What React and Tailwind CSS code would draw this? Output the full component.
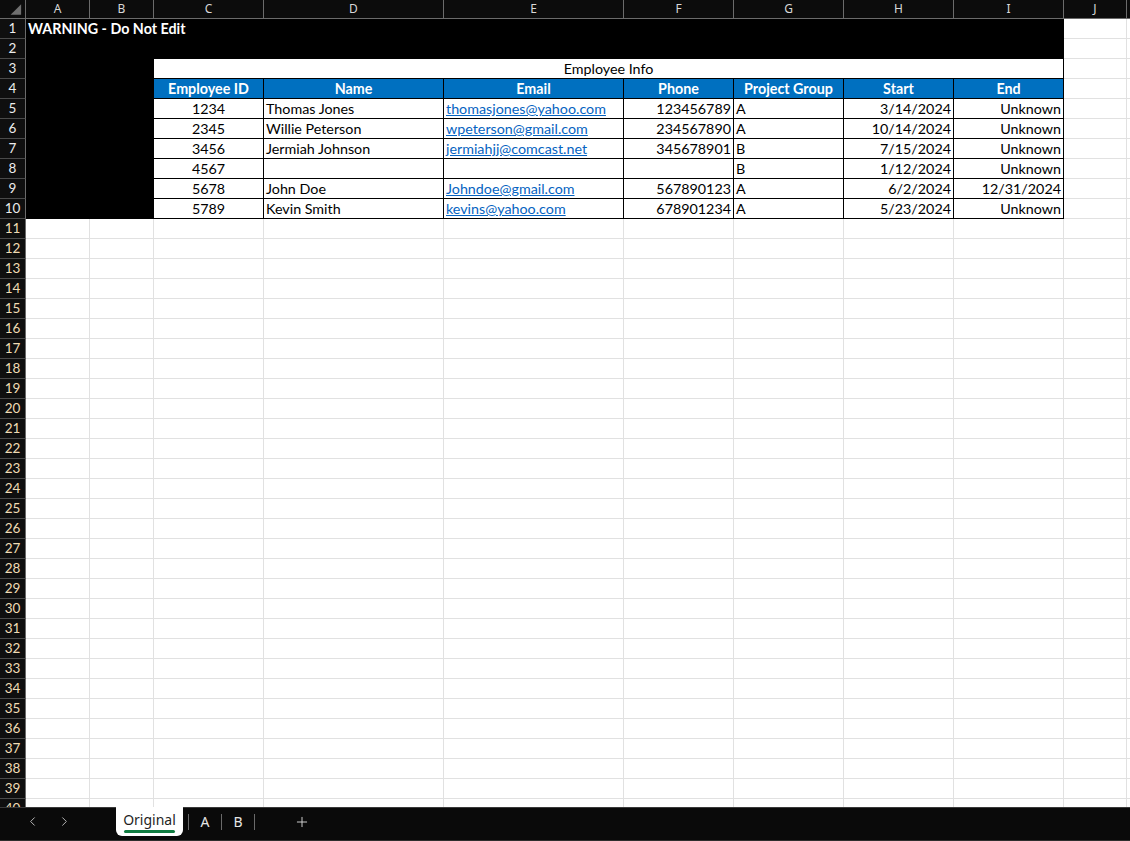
import { ChevronLeft, ChevronRight, Plus } from "lucide-react";

const COLS = [
  { key: "A", w: "w-[64px]" },
  { key: "B", w: "w-[64px]" },
  { key: "C", w: "w-[110px]" },
  { key: "D", w: "w-[180px]" },
  { key: "E", w: "w-[180px]" },
  { key: "F", w: "w-[110px]" },
  { key: "G", w: "w-[110px]" },
  { key: "H", w: "w-[110px]" },
  { key: "I", w: "w-[110px]" },
  { key: "J", w: "w-[63px]" },
];

const TABLE_COLS = [
  { label: "Employee ID", w: "w-[110px]", align: "justify-center" },
  { label: "Name", w: "w-[180px]", align: "justify-start" },
  { label: "Email", w: "w-[180px]", align: "justify-start" },
  { label: "Phone", w: "w-[110px]", align: "justify-end" },
  { label: "Project Group", w: "w-[110px]", align: "justify-start" },
  { label: "Start", w: "w-[110px]", align: "justify-end" },
  { label: "End", w: "w-[110px]", align: "justify-end" },
];

const EMPLOYEES = [
  ["1234", "Thomas Jones", "thomasjones@yahoo.com", "123456789", "A", "3/14/2024", "Unknown"],
  ["2345", "Willie Peterson", "wpeterson@gmail.com", "234567890", "A", "10/14/2024", "Unknown"],
  ["3456", "Jermiah Johnson", "jermiahjj@comcast.net", "345678901", "B", "7/15/2024", "Unknown"],
  ["4567", "", "", "", "B", "1/12/2024", "Unknown"],
  ["5678", "John Doe", "Johndoe@gmail.com", "567890123", "A", "6/2/2024", "12/31/2024"],
  ["5789", "Kevin Smith", "kevins@yahoo.com", "678901234", "A", "5/23/2024", "Unknown"],
];

const cellFont = { fontFamily: "Lato, 'Open Sans', sans-serif" };

function RowHeader({ n }) {
  return (
    <div
      className={`w-[26px] shrink-0 h-full flex items-center justify-center bg-[#0f0f0f] border-r border-b border-r-[#6b6b6b] border-b-[#4a4a4a] text-[13.5px] ${
        n <= 10 ? "text-[#ececec]" : "text-[#f0dcb4]"
      }`}
    >
      {n}
    </div>
  );
}

function GridCell({ w }) {
  return <div className={`${w} shrink-0 h-full border-r border-b border-[#e1e1e1]`} />;
}

function Tail() {
  return (
    <>
      <GridCell w="w-[63px]" />
      <div className="flex-1 h-full border-b border-[#e1e1e1]" />
    </>
  );
}

function Row({ n, children }) {
  return (
    <div className="flex h-[20px] shrink-0">
      <RowHeader n={n} />
      {children}
    </div>
  );
}

export default function App() {
  const emptyRows = [];
  for (let i = 11; i <= 40; i++) emptyRows.push(i);

  return (
    <div
      className="w-[1130px] h-[841px] flex flex-col overflow-hidden bg-white"
      style={{ fontFamily: "'Noto Sans', 'Open Sans', sans-serif" }}
    >
      {/* column headers */}
      <div className="flex h-[19px] shrink-0 bg-[#0c0c0c] border-b border-[#6b6b6b]">
        <div className="w-[26px] shrink-0 h-full border-r border-[#6b6b6b] flex items-center justify-center">
          <svg width="26" height="18" viewBox="0 0 26 18">
            <polygon points="22,4 22,15 11,15" fill="#6f6f6f" />
          </svg>
        </div>
        {COLS.map((c) => (
          <div
            key={c.key}
            className={`${c.w} shrink-0 h-full border-r border-[#6b6b6b] flex items-center justify-center text-[12px] text-[#d8d8d8]`}
          >
            {c.key}
          </div>
        ))}
        <div className="flex-1" />
      </div>

      {/* sheet body */}
      <div className="flex-1 flex flex-col overflow-hidden text-[14.3px] text-black" style={cellFont}>
        <Row n={1}>
          <div className="w-[1038px] shrink-0 h-full bg-black text-white font-bold flex items-center pl-[2px]">
            WARNING - Do Not Edit
          </div>
          <Tail />
        </Row>
        <Row n={2}>
          <div className="w-[1038px] shrink-0 h-full bg-black" />
          <Tail />
        </Row>
        <Row n={3}>
          <div className="w-[128px] shrink-0 h-full bg-black" />
          <div className="w-[910px] shrink-0 h-full border-r border-b border-black flex items-center justify-center">
            Employee Info
          </div>
          <Tail />
        </Row>
        <Row n={4}>
          <div className="w-[128px] shrink-0 h-full bg-black" />
          {TABLE_COLS.map((c) => (
            <div
              key={c.label}
              className={`${c.w} shrink-0 h-full bg-[#0070c0] border-r border-b border-black flex items-center justify-center text-white font-bold`}
            >
              {c.label}
            </div>
          ))}
          <Tail />
        </Row>
        {EMPLOYEES.map((emp, r) => (
          <Row n={r + 5} key={emp[0]}>
            <div className="w-[128px] shrink-0 h-full bg-black" />
            {TABLE_COLS.map((c, i) => (
              <div
                key={c.label}
                className={`${c.w} shrink-0 h-full border-r border-b border-black flex items-center px-[2px] whitespace-nowrap ${c.align}`}
              >
                {i === 2 && emp[i] ? (
                  <span className="text-[#0563c1] underline">{emp[i]}</span>
                ) : (
                  emp[i]
                )}
              </div>
            ))}
            <Tail />
          </Row>
        ))}
        {emptyRows.map((n) => (
          <Row n={n} key={n}>
            {COLS.map((c) => (
              <GridCell key={c.key} w={c.w} />
            ))}
            <div className="flex-1 h-full border-b border-[#e1e1e1]" />
          </Row>
        ))}
      </div>

      {/* sheet tabs */}
      <div className="h-[34px] shrink-0 flex bg-[#0a0a0a] border-t border-b border-t-[#3a3a3a] border-b-[#2e2e2e] text-[14px]">
        <div className="w-[116px] shrink-0 flex items-center pl-[16px] -mt-[5px]">
          <div className="w-[32px] flex justify-center text-[#b4b4b4]">
            <ChevronLeft size={15} strokeWidth={1.6} />
          </div>
          <div className="w-[32px] flex justify-center text-[#b4b4b4]">
            <ChevronRight size={15} strokeWidth={1.6} />
          </div>
        </div>
        <div className="w-[67px] shrink-0 -mt-px h-[29px] bg-white rounded-b-[6px] flex flex-col items-center justify-center">
          <span className="text-[#1f1f1f] leading-[18px] pt-[1px]">Original</span>
          <span className="w-[51px] h-[3px] bg-[#107c41] rounded-full mt-[1px]" />
        </div>
        <div className="flex items-center">
          <div className="w-px h-[16px] bg-[#6a6a6a] ml-[5px] -mt-[5px]" />
          <div className="w-[32px] text-center text-[#e6e6e6] -mt-[5px]">A</div>
          <div className="w-px h-[16px] bg-[#6a6a6a] -mt-[5px]" />
          <div className="w-[32px] text-center text-[#e6e6e6] -mt-[5px]">B</div>
          <div className="w-px h-[16px] bg-[#6a6a6a] -mt-[5px]" />
          <div className="w-[94px] flex justify-center text-[#d8d8d8] -mt-[5px]">
            <Plus size={16} strokeWidth={1.4} />
          </div>
        </div>
        <div className="flex-1" />
      </div>
    </div>
  );
}
